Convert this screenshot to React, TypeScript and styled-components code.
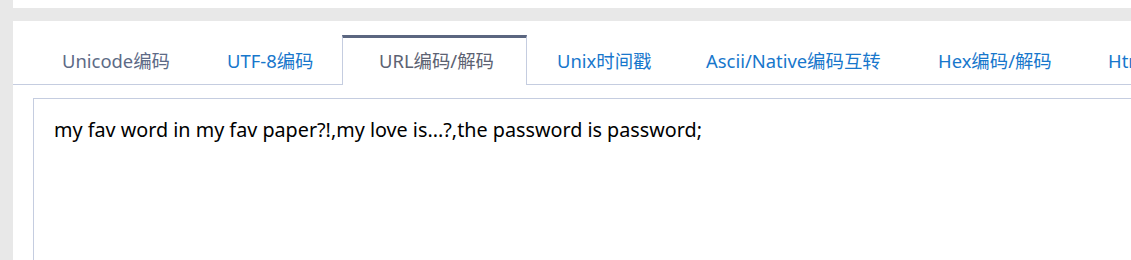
import React from "react";
import styled, { createGlobalStyle } from "styled-components";

const Global = createGlobalStyle`
  html, body { margin: 0; padding: 0; background: #e8e8e8; overflow: hidden; }
  body { font-family: "Noto Sans", "Noto Sans CJK SC", sans-serif; }
`;

const Page = styled.div`
  padding-left: 13px;
  height: 260px;
  display: flex;
  flex-direction: column;
`;

const TopStrip = styled.div`
  height: 8px;
  background: #fff;
  flex: none;
`;

const Gap = styled.div`
  height: 13px;
  flex: none;
`;

const Panel = styled.div`
  background: #fff;
  flex: 1;
  padding-top: 14px;
  overflow: hidden;
`;

const TabBar = styled.div`
  display: flex;
  border-bottom: 1px solid #c5cde0;
  padding-left: 19px;
  height: 49px;
  white-space: nowrap;
`;

const Tab = styled.div<{ $active?: boolean; $muted?: boolean; $w: number; $pl: number }>`
  flex: none;
  width: ${(p) => p.$w}px;
  box-sizing: border-box;
  display: flex;
  align-items: center;
  justify-content: flex-start;
  padding-left: ${(p) => p.$pl - (p.$active ? 1 : 0)}px;
  font-family: "Noto Sans", "Noto Sans CJK SC", sans-serif;
  font-size: 18.4px;
  height: ${(p) => (p.$active ? "50px" : "49px")};
  color: ${(p) => (p.$active ? "#5c6272" : p.$muted ? "#5d6a86" : "#1877cc")};
  background: ${(p) => (p.$active ? "#fff" : "transparent")};
  border-top: 3px solid ${(p) => (p.$active ? "#5b6680" : "transparent")};
  border-left: ${(p) => (p.$active ? "1px solid #c5cde0" : "none")};
  border-right: ${(p) => (p.$active ? "1px solid #c5cde0" : "none")};
  padding-bottom: 3px;
`;

const Body = styled.div`
  padding: 13px 0 0 20px;
`;

const Editor = styled.textarea`
  display: block;
  width: 1200px;
  height: 200px;
  box-sizing: border-box;
  border: 1px solid #c5cde0;
  border-right: none;
  outline: none;
  resize: none;
  padding: 19px 20px;
  font-family: "Noto Sans", "Noto Sans CJK SC", sans-serif;
  font-size: 19.75px;
  line-height: 24px;
  color: #000;
  background: #fff;
`;

const tabs = [
  { label: "Unicode编码", w: 166, pl: 30, muted: true },
  { label: "UTF-8编码", w: 144, pl: 29 },
  { label: "URL编码/解码", w: 185, pl: 37, active: true },
  { label: "Unix时间戳", w: 152, pl: 30 },
  { label: "Ascii/Native编码互转", w: 229, pl: 27 },
  { label: "Hex编码/解码", w: 171, pl: 30 },
  { label: "Html编码/解码", w: 170, pl: 29 },
];

export default function App() {
  return (
    <>
      <Global />
      <Page>
        <TopStrip />
        <Gap />
        <Panel>
          <TabBar>
            {tabs.map((t) => (
              <Tab key={t.label} $w={t.w} $pl={t.pl} $active={t.active} $muted={t.muted}>
                {t.label}
              </Tab>
            ))}
          </TabBar>
          <Body>
            <Editor
              readOnly
              defaultValue="my fav word in my fav paper?!,my love is...?,the password is password;"
            />
          </Body>
        </Panel>
      </Page>
    </>
  );
}
